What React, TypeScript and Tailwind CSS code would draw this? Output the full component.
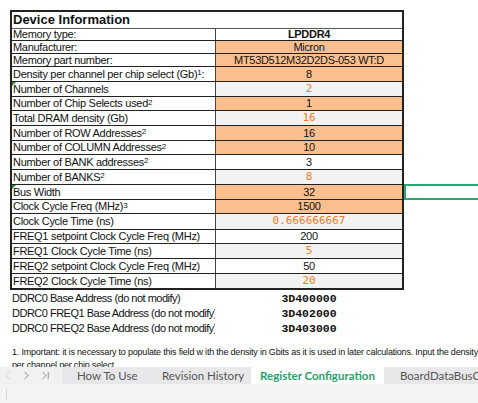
import { ChevronLeft, ChevronRight, ChevronLast } from "lucide-react";

const PEACH = "bg-[#fabf8f]";
const GRAY = "bg-[#f2f2f2]";
const WHITE = "bg-white";

type Row = {
  label: React.ReactNode;
  value: string;
  bg: string;
  orange?: boolean;
  h: string;
  mark?: boolean;
};

const Sup = ({ n }: { n: string }) => (
  <sup className="relative -top-[1px] text-[8px]">{n}</sup>
);

const rows: Row[] = [
  { label: "Memory type:", value: "LPDDR4", bg: WHITE, h: "h-[12px]" },
  { label: "Manufacturer:", value: "Micron", bg: PEACH, h: "h-[13px]" },
  { label: "Memory part number:", value: "MT53D512M32D2DS-053 WT:D", bg: PEACH, h: "h-[13px]" },
  {
    label: (
      <>
        Density per channel per chip select (Gb)
        <Sup n="1" />:
      </>
    ),
    value: "8",
    bg: PEACH,
    h: "h-[15px]",
  },
  { label: "Number of Channels", value: "2", bg: GRAY, orange: true, h: "h-[15px]", mark: true },
  {
    label: (
      <>
        Number of Chip Selects used
        <Sup n="2" />
      </>
    ),
    value: "1",
    bg: PEACH,
    h: "h-[14px]",
  },
  { label: "Total DRAM density (Gb)", value: "16", bg: GRAY, orange: true, h: "h-[15px]" },
  {
    label: (
      <>
        Number of ROW Addresses
        <Sup n="2" />
      </>
    ),
    value: "16",
    bg: PEACH,
    h: "h-[15px]",
  },
  {
    label: (
      <>
        Number of COLUMN Addresses
        <Sup n="2" />
      </>
    ),
    value: "10",
    bg: PEACH,
    h: "h-[14px]",
  },
  {
    label: (
      <>
        Number of BANK addresses
        <Sup n="2" />
      </>
    ),
    value: "3",
    bg: WHITE,
    h: "h-[15px]",
  },
  {
    label: (
      <>
        Number of BANKS
        <Sup n="2" />
      </>
    ),
    value: "8",
    bg: GRAY,
    orange: true,
    h: "h-[15px]",
  },
  { label: "Bus Width", value: "32", bg: PEACH, h: "h-[15px]", mark: true },
  {
    label: (
      <>
        Clock Cycle Freq (MHz)
        <Sup n="3" />
      </>
    ),
    value: "1500",
    bg: PEACH,
    h: "h-[14px]",
  },
  { label: "Clock Cycle Time (ns)", value: "0.666666667", bg: GRAY, orange: true, h: "h-[16px]" },
  { label: "FREQ1 setpoint Clock Cycle Freq (MHz)", value: "200", bg: WHITE, h: "h-[14px]" },
  { label: "FREQ1 Clock Cycle Time (ns)", value: "5", bg: GRAY, orange: true, h: "h-[15px]" },
  { label: "FREQ2 setpoint Clock Cycle Freq (MHz)", value: "50", bg: WHITE, h: "h-[15px]" },
  { label: "FREQ2 Clock Cycle Time (ns)", value: "20", bg: GRAY, orange: true, h: "h-[14px]" },
];

const addresses = [
  ["DDRC0 Base Address (do not modify)", "3D400000"],
  ["DDRC0 FREQ1 Base Address (do not modify)", "3D402000"],
  ["DDRC0 FREQ2 Base Address (do not modify)", "3D403000"],
];

export default function App() {
  return (
    <div className="relative flex h-[403px] w-[478px] flex-col overflow-hidden bg-white font-['Liberation_Sans',Arial,sans-serif] text-[#111]">
      <div className="pl-[10px] pt-[10px]">
        <div className="w-[394px] border-2 border-[#222]">
          <div className="h-[17px] border-b border-[#555] pl-[1px] text-[13px] leading-[16px] font-bold">
            Device Information
          </div>
          {rows.map((r, i) => (
            <div
              key={i}
              className={`relative flex ${r.h} ${
                i === rows.length - 1 ? "" : "border-b border-[#222]"
              }`}
            >
              {r.mark && (
                <div className="absolute left-0 top-0 h-0 w-0 border-t-[4px] border-r-[4px] border-t-[#2e8b3a] border-r-transparent" />
              )}
              <div className="flex w-[204px] items-center overflow-hidden whitespace-nowrap border-r border-[#444] pl-[1px] text-[11px] tracking-[-0.3px]">
                {r.label}
              </div>
              <div
                className={`flex flex-1 items-center justify-center ${r.bg} ${
                  r.orange
                    ? "font-['DejaVu_Sans_Mono',monospace] text-[11px] text-[#f27a22]"
                    : "text-[11px] tracking-[-0.3px]"
                } ${i === 0 ? "font-bold" : ""}`}
              >
                {r.value}
              </div>
            </div>
          ))}
        </div>
      </div>

      <div className="absolute left-[404px] top-[184px] h-[16px] w-[80px] border-2 border-[#28a870]" />

      <div className="flex flex-col pl-[12px] pt-[1px]">
        {addresses.map(([label, value]) => (
          <div key={value} className="flex h-[15px] items-center">
            <div className="w-[203px] overflow-hidden whitespace-nowrap text-[11px] tracking-[-0.5px]">
              {label}
            </div>
            <div className="w-[188px] text-center font-['Liberation_Mono',monospace] text-[11.5px] font-bold">
              {value}
            </div>
          </div>
        ))}
      </div>

      <div className="mt-[10px] whitespace-nowrap pl-[12px] text-[9px] leading-[13px] tracking-[-0.2px]">
        <div>
          1. Important: it is necessary to populate this field w ith the density in Gbits as it is used in later calculations. Input the density
        </div>
        <div className="h-[8px] overflow-hidden">per channel per chip select</div>
      </div>

      <div className="flex h-[17px] shrink-0 items-stretch whitespace-nowrap bg-[#e8e8ea] font-['Lato',sans-serif] text-[11.5px] text-[#555]">
        <div className="flex w-[62px] shrink-0 items-center gap-[6px] bg-[#f1f1f2] pl-[1px]">
          <ChevronLeft size={13} strokeWidth={1.3} className="text-[#c4c4c4]" />
          <ChevronRight size={13} strokeWidth={1.3} className="text-[#666]" />
          <ChevronLast size={13} strokeWidth={1.3} className="text-[#666]" />
        </div>
        <div className="flex w-[89px] shrink-0 items-center pl-[15px]">How To Use</div>
        <div className="flex w-[100px] shrink-0 items-center pl-[11px]">Revision History</div>
        <div className="flex w-[133px] shrink-0 items-center justify-center bg-white font-bold text-[#23a36a]">
          Register Configuration
        </div>
        <div className="flex shrink-0 items-center pl-[16px]">BoardDataBusConfig</div>
      </div>
      <div className="flex flex-1 items-center bg-[#f4f4f6] pl-[6px]">
        <div className="h-[12px] w-px bg-[#d8d8d8]" />
      </div>
    </div>
  );
}
